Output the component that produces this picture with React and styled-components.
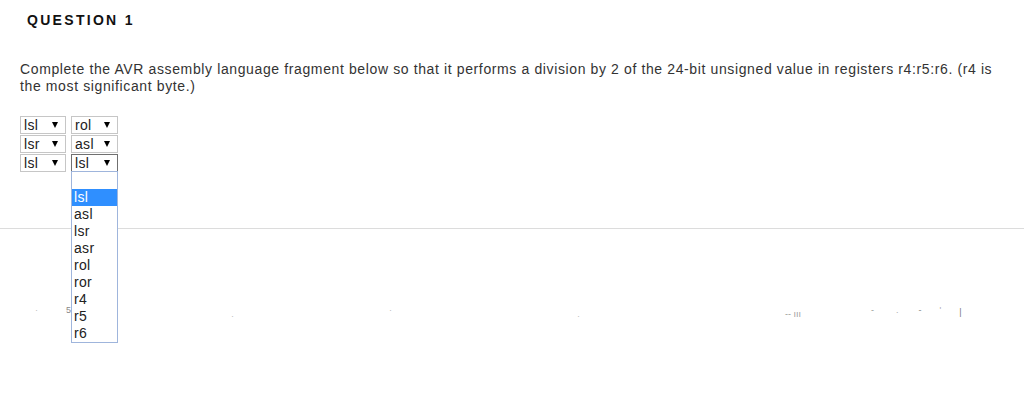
import React from 'react';
import styled, { createGlobalStyle } from 'styled-components';

const GlobalStyle = createGlobalStyle`
  html, body {
    margin: 0;
    padding: 0;
    background: #fff;
  }
  body {
    font-family: "Liberation Sans", Arial, sans-serif;
    color: #333;
  }
`;

const Page = styled.div`
  width: 1024px;
  height: 414px;
  overflow: hidden;
  background: #fff;
`;

const Body = styled.div`
  padding: 0 20px;
`;

const Heading = styled.h3`
  margin: 0;
  padding: 12px 0 0 7px;
  font-size: 14px;
  line-height: 16px;
  font-weight: bold;
  letter-spacing: 2.3px;
  color: #111;
`;

const Prompt = styled.p`
  margin: 33px 0 0;
  font-size: 14px;
  line-height: 17px;
  letter-spacing: 0.62px;
  color: #333;
`;

const Grid = styled.div`
  display: grid;
  grid-template-columns: 46px 47px;
  column-gap: 5px;
  row-gap: 1px;
  margin-top: 21px;
  width: max-content;
`;

const Cell = styled.div`
  position: relative;
`;

const Select = styled.div`
  box-sizing: border-box;
  height: 18px;
  display: flex;
  align-items: center;
  justify-content: space-between;
  padding: 0 7px 0 3px;
  border: 1px solid ${(p) => (p.$focused ? '#707070' : '#c6c6c6')};
  background: #fff;
  font-size: 14px;
  letter-spacing: 0.3px;
  color: #222;
`;

const Arrow = styled.span`
  width: 0;
  height: 0;
  border-left: 3.5px solid transparent;
  border-right: 3.5px solid transparent;
  border-top: 6px solid #000;
`;

const List = styled.ul`
  position: absolute;
  top: 17px;
  left: 0;
  z-index: 2;
  box-sizing: border-box;
  width: 47px;
  margin: 0;
  padding: 0;
  list-style: none;
  background: #fff;
  border: 1px solid #9fb5dc;
`;

const Option = styled.li`
  height: 17px;
  line-height: 17px;
  padding-left: 2px;
  font-size: 14px;
  letter-spacing: 0.3px;
  color: ${(p) => (p.$active ? '#fff' : '#222')};
  background: ${(p) => (p.$active ? '#2f8fff' : 'transparent')};
`;

const Rule = styled.hr`
  margin: 56px 0 0;
  border: 0;
  border-top: 1px solid #dcdcdc;
`;

const Residue = styled.div`
  display: flex;
  align-items: flex-start;
  height: 40px;
  margin-top: 76px;
  font-size: 9px;
  line-height: 10px;
  color: #bbb;
`;

const Bit = styled.span`
  margin-left: ${(p) => p.$gap}px;
  margin-top: ${(p) => p.$drop || 0}px;
  color: ${(p) => p.$tone || '#bbb'};
`;

const rows = [
  ['lsl', 'rol'],
  ['lsr', 'asl'],
  ['lsl', 'lsl'],
];

const options = ['', 'lsl', 'asl', 'lsr', 'asr', 'rol', 'ror', 'r4', 'r5', 'r6'];

function Dropdown({ value, focused, open }) {
  return (
    <Cell>
      <Select $focused={focused}>
        <span>{value}</span>
        <Arrow />
      </Select>
      {open && (
        <List>
          {options.map((o, i) => (
            <Option key={i} $active={o === 'lsl'}>
              {o || '\u00a0'}
            </Option>
          ))}
        </List>
      )}
    </Cell>
  );
}

export default function App() {
  return (
    <Page>
      <GlobalStyle />
      <Body>
        <Heading>QUESTION 1</Heading>
        <Prompt>
          Complete the AVR assembly language fragment below so that it performs a division by 2 of the
          24-bit unsigned value in registers r4:r5:r6. (r4 is the most significant byte.)
        </Prompt>
        <Grid>
          {rows.map((r, i) =>
            r.map((v, j) => {
              const last = i === 2 && j === 1;
              return <Dropdown key={`${i}-${j}`} value={v} focused={last} open={last} />;
            })
          )}
        </Grid>
      </Body>
      <Rule />
      <Residue>
        <Bit $gap={35} $drop={0}>·</Bit>
        <Bit $gap={28} $tone="#888">5</Bit>
        <Bit $gap={160} $drop={6}>·</Bit>
        <Bit $gap={155} $drop={0}>·</Bit>
        <Bit $gap={185} $drop={6}>·</Bit>
        <Bit $gap={205} $drop={4} $tone="#999">-- ııı</Bit>
        <Bit $gap={70} $drop={0} $tone="#999">-</Bit>
        <Bit $gap={22} $tone="#aaa">.</Bit>
        <Bit $gap={20} $tone="#888">-</Bit>
        <Bit $gap={18} $tone="#aaa">'</Bit>
        <Bit $gap={18} $drop={2} $tone="#777">|</Bit>
      </Residue>
    </Page>
  );
}
